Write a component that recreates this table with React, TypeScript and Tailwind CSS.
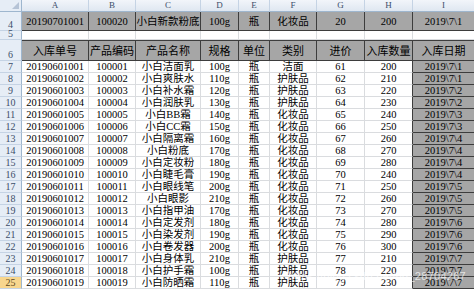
import React from 'react';

const cols = ['A', 'B', 'C', 'D', 'E', 'F', 'G', 'H', 'I'];

const rows: string[][] = [
  ['20190601001', '100001', '小白洁面乳', '100g', '瓶', '洁面', '61', '200', '2019\\7\\1'],
  ['20190601002', '100002', '小白爽肤水', '110g', '瓶', '护肤品', '62', '210', '2019\\7\\1'],
  ['20190601003', '100003', '小白补水霜', '120g', '瓶', '护肤品', '63', '220', '2019\\7\\2'],
  ['20190601004', '100004', '小白润肤乳', '130g', '瓶', '护肤品', '64', '230', '2019\\7\\2'],
  ['20190601005', '100005', '小白BB霜', '140g', '瓶', '化妆品', '65', '240', '2019\\7\\3'],
  ['20190601006', '100006', '小白CC霜', '150g', '瓶', '化妆品', '66', '250', '2019\\7\\3'],
  ['20190601007', '100007', '小白隔离霜', '160g', '瓶', '化妆品', '67', '260', '2019\\7\\4'],
  ['20190601008', '100008', '小白粉底', '170g', '瓶', '化妆品', '68', '270', '2019\\7\\4'],
  ['20190601009', '100009', '小白定妆粉', '180g', '瓶', '化妆品', '69', '280', '2019\\7\\4'],
  ['20190601010', '100010', '小白睫毛膏', '190g', '瓶', '化妆品', '70', '240', '2019\\7\\4'],
  ['20190601011', '100011', '小白眼线笔', '200g', '瓶', '化妆品', '71', '250', '2019\\7\\5'],
  ['20190601012', '100012', '小白眼影', '210g', '瓶', '化妆品', '72', '260', '2019\\7\\5'],
  ['20190601013', '100013', '小白指甲油', '170g', '瓶', '化妆品', '73', '270', '2019\\7\\5'],
  ['20190601014', '100014', '小白定发剂', '180g', '瓶', '化妆品', '74', '280', '2019\\7\\6'],
  ['20190601015', '100015', '小白染发剂', '190g', '瓶', '化妆品', '75', '290', '2019\\7\\6'],
  ['20190601016', '100016', '小白卷发器', '200g', '瓶', '化妆品', '76', '300', '2019\\7\\6'],
  ['20190601017', '100017', '小白身体乳', '210g', '瓶', '护肤品', '77', '210', '2019\\7\\7'],
  ['20190601018', '100018', '小白护手霜', '100g', '瓶', '护肤品', '78', '220', '2019\\7\\7'],
  ['20190601019', '100019', '小白防晒霜', '110g', '瓶', '护肤品', '79', '230', '2019\\7\\7'],
];

const row4 = ['20190701001', '100020', '小白新款粉底', '100g', '瓶', '化妆品', '20', '200', '2019\\7\\1'];
const row6 = ['入库单号', '产品编码', '产品名称', '规格', '单位', '类别', '进价', '入库数量', '入库日期'];

const font = { fontFamily: '"Liberation Serif", "Noto Sans CJK SC", serif' };

const RowHead = ({ n, active }: { n: number; active?: boolean }) => (
  <div
    className={`flex items-end justify-center border-r border-b border-r-[#9eb6ce] border-b-[#c5d3e4] text-[10px] leading-[11px] ${
      active ? 'bg-[#f8d68e] text-[#5b4a1e]' : 'bg-[#e6edf6] text-[#3c4e6a]'
    }`}
  >
    {n}
  </div>
);

const App = () => {
  return (
    <div className="relative w-[474px] h-[289px] overflow-hidden bg-white text-black" style={font}>
      <div className="grid grid-cols-[22px_67px_47px_65px_38px_31px_47px_48px_48px_62px] grid-rows-[12px_19px_9px_21px_repeat(19,12px)]">
        {/* corner + column letters */}
        <div className="relative bg-[#e6edf6] border-r border-b border-[#9eb6ce]">
          <div className="absolute right-[2px] bottom-[2px] w-0 h-0 border-l-[7px] border-l-transparent border-b-[7px] border-b-[#b5c3d6]" />
        </div>
        {cols.map((c) => (
          <div
            key={c}
            className="flex items-center justify-center bg-gradient-to-b from-[#f2f5fa] to-[#dfe7f1] border-r border-b border-r-[#c5d3e4] border-b-[#9eb6ce] text-[9px] text-[#3c4e6a]"
          >
            {c}
          </div>
        ))}

        {/* row 4 */}
        <RowHead n={4} />
        {row4.map((v, i) => (
          <div
            key={i}
            className="flex items-end justify-center pb-[2px] bg-[#a6a6a6] border-r border-b border-[#3d3d3d] text-[10.5px] leading-[12px] whitespace-nowrap"
          >
            {v}
          </div>
        ))}

        {/* row 5 */}
        <RowHead n={5} />
        {cols.map((c) => (
          <div key={c} className="border-r border-b border-[#dadcdf]" />
        ))}

        {/* row 6 */}
        <RowHead n={6} />
        {row6.map((v, i) => (
          <div
            key={i}
            className="flex items-end justify-center pb-[2px] bg-[#a6a6a6] border-t border-r border-b border-[#3d3d3d] text-[11px] leading-[13px] whitespace-nowrap"
          >
            {v}
          </div>
        ))}

        {/* data rows */}
        {rows.map((r, ri) => (
          <React.Fragment key={ri}>
            <RowHead n={ri + 7} active={ri === 18} />
            {r.map((v, i) => (
              <div
                key={i}
                className={`flex items-end justify-center border-b text-[10.5px] leading-[11px] whitespace-nowrap ${
                  i === 8
                    ? 'bg-[#a6a6a6] border-r border-[#3d3d3d]'
                    : i === 7
                    ? 'border-r border-r-[#3d3d3d] border-b-[#dadcdf]'
                    : 'border-r border-[#dadcdf]'
                }`}
              >
                {v}
              </div>
            ))}
          </React.Fragment>
        ))}
      </div>

      {/* watermark */}
      <div className="absolute right-[8px] bottom-[5px] text-[11px] text-white/70 tracking-wide" style={{ fontFamily: '"Liberation Sans", sans-serif' }}>
        https://blog.csdn.net/qq_28704267
      </div>
    </div>
  );
};

export default App;
